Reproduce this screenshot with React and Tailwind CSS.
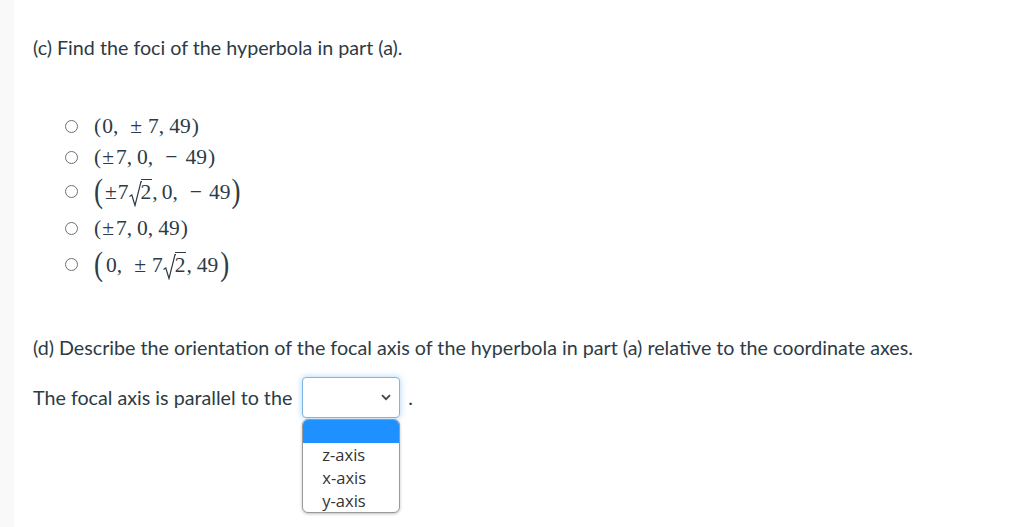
import React from "react";

/* small radio ring */
const Radio = () => (
  <span className="inline-block w-[13px] h-[13px] rounded-full border border-[#6f6f6f] bg-white shrink-0" />
);

/* horizontal gap inside math */
const Sp = ({ w }) => <span className="inline-block" style={{ width: w }} />;

/* square root of 2 */
const Sqrt2 = () => (
  <span className="relative pl-[12px]">
    <svg
      className="absolute left-0 top-[1px]"
      width="13"
      height="26"
      viewBox="0 0 13 26"
      fill="none"
      stroke="currentColor"
    >
      <path d="M0.5 15.5 L2.8 14 L6 24.5 L12 0.6 L13 0.6" strokeWidth="1.2" />
    </svg>
    <span className="border-t-[1.2px] border-current pr-[1px]">2</span>
  </span>
);

const Big = ({ children }) => (
  <span className="inline-block text-[27px] leading-none scale-y-125 translate-y-[1px]">
    {children}
  </span>
);

const options = [
  {
    h: "h-[30px]",
    body: (
      <>
        (<Sp w={1} />0,<Sp w={12} />±<Sp w={6} />7,<Sp w={5} />49<Sp w={1} />)
      </>
    ),
  },
  {
    h: "h-[32px]",
    body: (
      <>
        (<Sp w={1} />±<Sp w={2} />7,<Sp w={5} />0,<Sp w={12} />−<Sp w={8} />49<Sp w={1} />)
      </>
    ),
  },
  {
    h: "h-[36px]",
    body: (
      <>
        <Big>(</Big>
        <Sp w={2} />±<Sp w={1} />7<Sqrt2 />,<Sp w={4} />0,<Sp w={12} />−<Sp w={7} />49
        <Sp w={1} />
        <Big>)</Big>
      </>
    ),
  },
  {
    h: "h-[38px]",
    body: (
      <>
        (<Sp w={1} />±<Sp w={2} />7,<Sp w={5} />0,<Sp w={5} />49<Sp w={1} />)
      </>
    ),
  },
  {
    h: "h-[34px]",
    body: (
      <>
        <Big>(</Big>
        <Sp w={3} />0,<Sp w={12} />±<Sp w={6} />7<Sqrt2 />,<Sp w={5} />49
        <Sp w={2} />
        <Big>)</Big>
      </>
    ),
  },
];

export default function App() {
  return (
    <div className="flex min-h-[527px] bg-white text-[#2d3b45] font-['Lato',sans-serif]">
      <div className="w-[14px] shrink-0 bg-[#f9f9f9]" />

      <div className="flex-1 pl-[19px] pt-[34px]">
        <p className="text-[19.7px] leading-[27px]">
          (c) Find the foci of the hyperbola in part (a).
        </p>

        <ul className="mt-[50px] pl-[32px] font-['Liberation_Serif',serif] text-[21.5px]">
          {options.map((o, i) => (
            <li key={i} className={`flex items-center gap-[16px] ${o.h}`}>
              <Radio />
              <span className="whitespace-nowrap leading-[25px]">{o.body}</span>
            </li>
          ))}
        </ul>

        <p className="mt-[53px] text-[19.7px] leading-[27px]">
          (d) Describe the orientation of the focal axis of the hyperbola in
          part (a) relative to the coordinate axes.
        </p>

        <div className="mt-[16px] flex items-center text-[19.7px]">
          <span>The focal axis is parallel to the</span>
          <div className="relative ml-[10px]">
            <div className="w-[98px] h-[41px] rounded-[4px] border border-[#7fb6e6] bg-white shadow-[0_0_6px_rgba(102,175,233,0.55)] flex items-center justify-end pr-[8px]">
              <svg width="10" height="7" viewBox="0 0 10 7" fill="none" stroke="#444" strokeWidth="1.8">
                <path d="M1 1.2 L5 5.2 L9 1.2" />
              </svg>
            </div>

            {/* open select list */}
            <div className="absolute left-0 top-[42px] w-[98px] rounded-[6px] border border-[#9a9a9a] bg-white overflow-hidden shadow-[0_1px_3px_rgba(0,0,0,0.25)] font-['Open_Sans',sans-serif] text-[16.5px] text-[#333]">
              <div className="h-[23px] bg-[#1e90ff]" />
              {["z-axis", "x-axis", "y-axis"].map((t) => (
                <div key={t} className="h-[23px] leading-[23px] pl-[19px]">
                  {t}
                </div>
              ))}
            </div>
          </div>
          <span className="ml-[8px]">.</span>
        </div>
      </div>
    </div>
  );
}
